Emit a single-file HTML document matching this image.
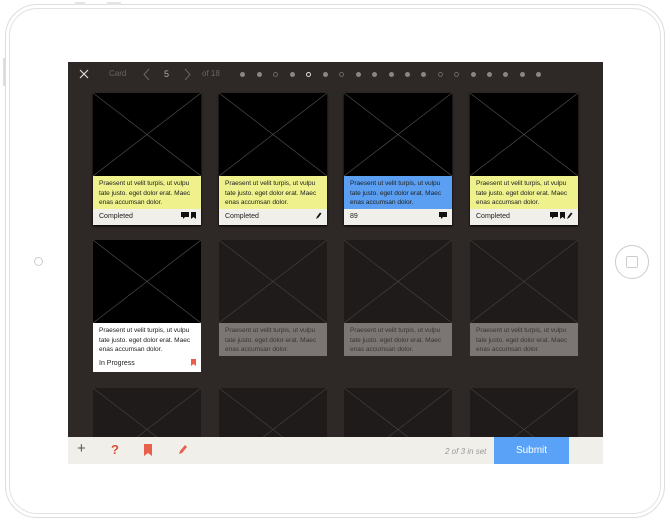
<!DOCTYPE html><html><head><style>
body{margin:0;width:670px;height:522px;background:#fff;position:relative;overflow:hidden;font-family:"Liberation Sans",sans-serif}
.abs{position:absolute}
.frame{left:5px;top:4px;width:658px;height:512px;border:1px solid #ddd;border-radius:32px}
.frame2{left:9px;top:8px;width:650px;height:504px;border:1px solid #e2e2e2;border-radius:28px}
.screen{left:68px;top:62px;width:535px;height:402px;background:#2e2826;overflow:hidden}
.card{position:absolute;width:108px}
.img{height:83px;background:#000;position:relative}
.img svg{position:absolute;left:0;top:0}
.txt{height:33px;font-size:6.6px;line-height:9.5px;color:#222;padding:3px 6px 0;box-sizing:border-box;white-space:nowrap;letter-spacing:-0.05px}
.ft{height:16px;background:#f0efea;font-size:7px;color:#222;padding:0 6px;line-height:16px;position:relative}
.dim .img{background:#1f1b1a}
.dim .txt{background:#7b7674;color:#3a3634}
.dot{position:absolute;width:5px;height:5px;border-radius:50%;background:#8a8583;top:72px}
</style></head><body>
<div class="abs frame"></div><div class="abs frame2"></div>
<div class="abs" style="left:3px;top:58px;width:2px;height:28px;background:#ddd"></div>
<div class="abs" style="left:75px;top:2px;width:10px;height:3px;background:#e5e5e5"></div>
<div class="abs" style="left:107px;top:2px;width:14px;height:3px;background:#e5e5e5"></div>
<div class="abs" style="left:34px;top:257px;width:7px;height:7px;border:1px solid #ccc;border-radius:50%"></div>
<div class="abs" style="left:615px;top:245px;width:32px;height:32px;border:1px solid #ccc;border-radius:50%"></div>
<div class="abs" style="left:626px;top:256px;width:10px;height:10px;border:1px solid #ccc;border-radius:2px"></div>
<div class="abs screen">
<svg class="abs" style="left:11px;top:7px" width="10" height="10"><path d="M1 1L9 9M9 1L1 9" stroke="#ddd" stroke-width="1.2"/></svg>
<div class="abs" style="left:41px;top:7px;color:#6a6462;font-size:8px">Card</div>
<svg class="abs" style="left:75px;top:6px" width="7" height="13"><path d="M6 1L1 6.5L6 12" stroke="#6a6462" fill="none"/></svg>
<div class="abs" style="left:96px;top:7px;color:#aaa;font-size:9px">5</div>
<svg class="abs" style="left:116px;top:6px" width="7" height="13"><path d="M1 1L6 6.5L1 12" stroke="#6a6462" fill="none"/></svg>
<div class="abs" style="left:134px;top:7px;color:#6a6462;font-size:8px">of 18</div>
</div>
<div id="dots"></div>
<div class="abs" style="left:68px;top:437px;width:535px;height:27px;background:#f0efea;z-index:5"></div>
<div class="abs" style="left:77px;top:440px;font-size:15px;color:#555;z-index:6">+</div>
<div class="abs" style="left:111px;top:442px;font-size:13px;color:#e0503a;font-weight:bold;z-index:6">?</div>
<svg class="abs" style="left:144px;top:444px;z-index:6" width="8" height="12"><path d="M0 0H8V12L4 9L0 12Z" fill="#e8604c"/></svg>
<svg class="abs" style="left:178px;top:444px;z-index:6" width="10" height="11"><path d="M1 10L2 7L7 1L9 3L4 9Z" fill="#e8604c"/></svg>
<div class="abs" style="left:445px;top:447px;font-size:8px;color:#999;font-style:italic;z-index:6">2 of 3 in set</div>
<div class="abs" style="left:494px;top:437px;width:75px;height:27px;background:#59a2f7;color:#fff;font-size:10px;text-align:center;line-height:27px;z-index:6">Submit</div>
<script>
var dx=[237,254,270,287,303,320,336,353,369,386,402,418,435,451,468,484,500,517,533];
var h='';dx.forEach(function(x,i){var ring=(i==2||i==6||i==12||i==13);var cur=i==4;
h+='<div class="dot" style="left:'+(x+3)+'px;'+(ring?'background:none;border:1px solid #6a6462;width:3px;height:3px;':'')+(cur?'background:#2e2826;border:1px solid #ddd;width:3px;height:3px;box-shadow:inset 0 0 0 1px #2e2826;':'')+'"></div>';});
document.getElementById('dots').innerHTML=h;
var T='Praesent ut velit turpis, ut vulpu<br>tate justo. eget dolor erat. Maec<br>enas accumsan dolor.';
var xs=[93,219,344,470];
function X(c){return '<svg width="108" height="83"><path d="M0 0L108 83M108 0L0 83" stroke="'+c+'" stroke-width="0.6"/></svg>';}
var C='<svg width="8" height="7"><path d="M0 0H8V5H4L2 7V5H0Z" fill="#111"/></svg>';
var B='<svg width="5" height="7"><path d="M0 0H5V7L2.5 5L0 7Z" fill="#111"/></svg>';
var P='<svg width="6" height="7"><path d="M0 7L1 4.5L4 0.5L5.5 1.5L2.5 5.5Z" fill="#111"/></svg>';
var foot=[['Completed',C+' '+B],['Completed',P],['89',C],['Completed',C+' '+B+' '+P]];
var bg=['#eef18c','#eef18c','#5a9ff2','#eef18c'];
var s='';
xs.forEach(function(x,i){s+='<div class="card" style="left:'+x+'px;top:93px;box-shadow:0 1px 2px #000"><div class="img">'+X('#555')+'</div><div class="txt" style="background:'+bg[i]+'">'+T+'</div><div class="ft">'+foot[i][0]+'<span style="position:absolute;right:5px;top:1px;">'+foot[i][1]+'</span></div></div>';});
xs.forEach(function(x,i){if(i==0)s+='<div class="card" style="left:'+x+'px;top:240px"><div class="img">'+X('#555')+'</div><div class="txt" style="background:#fff;height:33px">'+T+'</div><div class="ft" style="background:#fff">In Progress<span style="position:absolute;right:5px;top:1px"><svg width="5" height="7"><path d="M0 0H5V7L2.5 5L0 7Z" fill="#e8604c"/></svg></span></div></div>';
else s+='<div class="card dim" style="left:'+x+'px;top:240px"><div class="img">'+X('#4a4340')+'</div><div class="txt">'+T+'</div></div>';});
xs.forEach(function(x){s+='<div class="card dim" style="left:'+x+'px;top:388px;height:49px;overflow:hidden"><div class="img">'+X('#4a4340')+'</div></div>';});
document.body.insertAdjacentHTML('beforeend',s);
</script>
</body></html>
